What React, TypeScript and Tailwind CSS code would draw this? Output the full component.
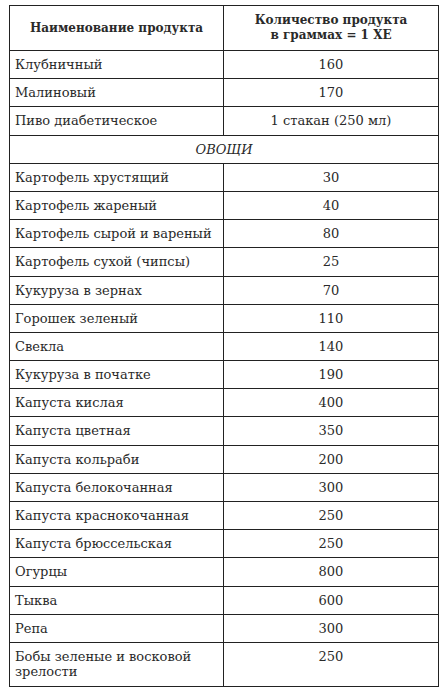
const before = [
  ["Клубничный", "160"],
  ["Малиновый", "170"],
  ["Пиво диабетическое", "1 стакан (250 мл)"],
];

const veg = [
  ["Картофель хрустящий", "30"],
  ["Картофель жареный", "40"],
  ["Картофель сырой и вареный", "80"],
  ["Картофель сухой (чипсы)", "25"],
  ["Кукуруза в зернах", "70"],
  ["Горошек зеленый", "110"],
  ["Свекла", "140"],
  ["Кукуруза в початке", "190"],
  ["Капуста кислая", "400"],
  ["Капуста цветная", "350"],
  ["Капуста кольраби", "200"],
  ["Капуста белокочанная", "300"],
  ["Капуста краснокочанная", "250"],
  ["Капуста брюссельская", "250"],
  ["Огурцы", "800"],
  ["Тыква", "600"],
  ["Репа", "300"],
];

function Row({ name, qty }: { name: string; qty: string }) {
  return (
    <tr className="h-[28.2px]">
      <td className="border border-[#222] px-[5px] pt-[6px] align-top whitespace-nowrap">{name}</td>
      <td className="border border-[#222] px-[5px] pt-[6px] align-top text-center">{qty}</td>
    </tr>
  );
}

export default function App() {
  return (
    <div className="w-[446px] h-[693px] bg-white pt-[5px] pl-[9px] overflow-hidden">
      <table
        className="w-[429px] border-collapse table-fixed text-[13px] leading-[15px] text-[#2a2a2a]"
        style={{ fontFamily: '"DejaVu Serif", "Liberation Serif", serif' }}
      >
        <colgroup>
          <col className="w-[214px]" />
          <col className="w-[215px]" />
        </colgroup>
        <thead>
          <tr className="h-[45px]">
            <th className="border border-[#222] font-bold text-[12px] text-center align-middle">
              Наименование продукта
            </th>
            <th className="border border-[#222] font-bold text-[12px] text-center align-middle">
              Количество продукта
              <br />в граммах = 1 ХЕ
            </th>
          </tr>
        </thead>
        <tbody>
          {before.map(([n, q]) => (
            <Row key={n} name={n} qty={q} />
          ))}
          <tr className="h-[28.2px]">
            <td colSpan={2} className="border border-[#222] pt-[6px] align-top text-center italic">
              ОВОЩИ
            </td>
          </tr>
          {veg.map(([n, q]) => (
            <Row key={n} name={n} qty={q} />
          ))}
          <tr className="h-[44px]">
            <td className="border border-[#222] px-[5px] pt-[6px] align-top">
              Бобы зеленые и восковой
              <br />
              зрелости
            </td>
            <td className="border border-[#222] px-[5px] pt-[6px] align-top text-center">250</td>
          </tr>
        </tbody>
      </table>
    </div>
  );
}
